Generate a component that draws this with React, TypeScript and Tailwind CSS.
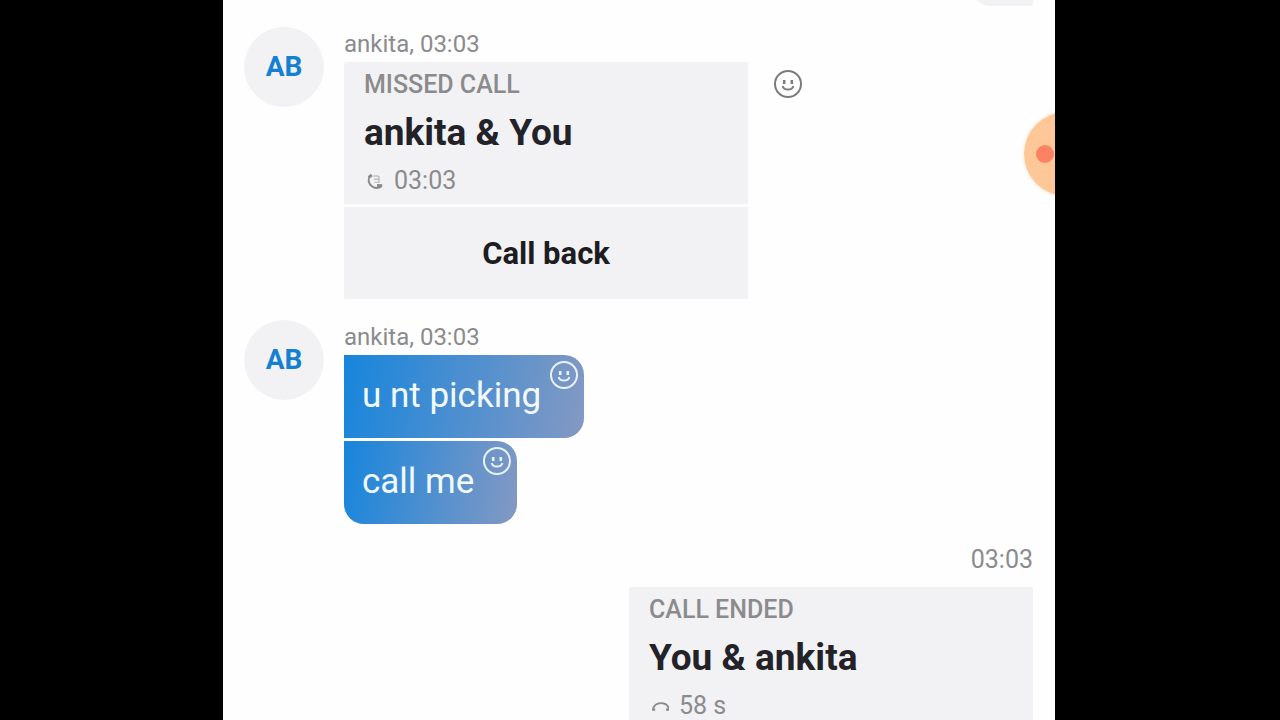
import type { ReactNode } from 'react';
import clsx from 'clsx';

function SmileIcon() {
  return (
    <svg viewBox="0 0 28 28" className="block size-7" fill="none" stroke="currentColor" aria-hidden="true">
      <circle cx="14" cy="14" r="13" strokeWidth="2" />
      <path d="M10.200 10v4M17.800 10v4" strokeWidth="2.600" />
      <path d="M8.600 16c.8 2.600 2.800 3.600 5.400 3.600s4.600-1 5.400-3.600" strokeWidth="2" />
    </svg>
  );
}

function MissedIcon() {
  return (
    <svg viewBox="0 0 20 20" className="size-5" fill="none" stroke="currentColor" aria-hidden="true">
      <path d="M6 5C3.600 8 4.200 13 8.400 15.600c3 1.800 6.600 1.600 9-.4" strokeWidth="2" />
      <path d="M4.800 6.400 7.800 4M13 14.400l5.200.4" strokeWidth="3" />
      <path d="M9.400 5h5M9.800 8.200h5M10.400 11.400h5M15 5v7" strokeWidth="1.400" opacity="0.500" />
    </svg>
  );
}

function EndedIcon() {
  return (
    <svg viewBox="0 0 20 20" className="size-5" fill="none" stroke="currentColor" aria-hidden="true">
      <path d="M4 14C4.600 9 7.600 7.200 12 7.200s7.400 1.800 8 6.800" strokeWidth="1.800" />
      <path d="M3.200 13.600h3M17 13.600h3" strokeWidth="2.400" />
    </svg>
  );
}

function ReactButton({ className }: { className?: string }) {
  return (
    <button type="button" aria-label="React" className={clsx('size-7 shrink-0 rounded-full', className)}>
      <SmileIcon />
    </button>
  );
}

function Message({ time, children }: { time: string; children: ReactNode }) {
  return (
    <article className="flex items-start gap-5">
      <div className="flex size-20 shrink-0 items-center justify-center rounded-full bg-[#f2f2f4] text-[28px] font-bold text-[#1580d2]">
        AB
      </div>
      <div className="min-w-0 flex-1">
        <p className="text-2xl leading-[35px] text-[#8b8b8d]">ankita, {time}</p>
        {children}
      </div>
    </article>
  );
}

type CallCardProps = {
  status: string;
  title: string;
  detail: string;
  icon: ReactNode;
  action?: string;
};

function CallCard({ status, title, detail, icon, action }: CallCardProps) {
  return (
    <div className="w-[404px] max-w-full">
      <div className="rounded-t-xs bg-[#f2f2f4] px-5 py-2">
        <p className="text-[25px] leading-[30px] font-medium text-[#8b8b8d]">{status}</p>
        <h2 className="my-[13px] text-[37px] leading-10 font-bold text-[#222228]">{title}</h2>
        <p className="flex items-center gap-2.5 text-[25px] leading-[30px] text-[#8b8b8d]">
          {icon}
          {detail}
        </p>
      </div>
      {action && (
        <button
          type="button"
          className="mt-[3px] h-[92px] w-full rounded-b-xs bg-[#f2f2f4] pt-0.5 text-[31px] font-bold text-[#1c1c22]"
        >
          {action}
        </button>
      )}
    </div>
  );
}

function Bubble({ text, className }: { text: string; className: string }) {
  return (
    <div
      className={clsx(
        'relative h-[83px] bg-linear-100/srgb from-[#1785dc] to-[#8499c3] pr-[43px] pl-[18px] text-[35px] leading-[82px] text-[#f2faff]',
        className,
      )}
    >
      {text}
      <ReactButton className="absolute top-[6px] right-[6px] text-[#e9f3fc]" />
    </div>
  );
}

export default function App() {
  return (
    <div className="h-screen overflow-hidden bg-black pr-0.5 font-['Roboto',sans-serif]">
      <main className="relative mx-auto h-full w-full max-w-[832px] overflow-hidden bg-[#fefefe] pr-[22px] pl-[21px]">
        {/* tail of the previous outgoing bubble, scrolled off the top */}
        <div className="-mt-[77px] ml-auto h-[83px] w-[62px] rounded-bl-[20px] rounded-br-xs bg-[#f2f2f4]" />

        <div className="flex flex-col gap-[21px] pt-[21px]">
          <Message time="03:03">
            <div className="flex items-start gap-[26px]">
              <CallCard
                status="MISSED CALL"
                title="ankita & You"
                detail="03:03"
                icon={<MissedIcon />}
                action="Call back"
              />
              <ReactButton className="mt-2 text-[#7c7c7e]" />
            </div>
          </Message>

          <Message time="03:03">
            <div className="flex flex-col items-start gap-[3px]">
              <Bubble text="u nt picking" className="rounded-r-[20px]" />
              <Bubble text="call me" className="rounded-r-[20px] rounded-bl-[20px]" />
            </div>
          </Message>
        </div>

        <article className="flex flex-col items-end pt-[18px]">
          <p className="mb-2.5 text-[25px] leading-[35px] text-[#8b8b8d]">03:03</p>
          <CallCard status="CALL ENDED" title="You & ankita" detail="58 s" icon={<EndedIcon />} />
        </article>

        <button
          type="button"
          aria-label="Record"
          className="absolute top-28 -right-[53px] size-[84px] rounded-full bg-[#fec797] shadow-[0_0_4px_#fee3cc]"
        >
          <span className="absolute top-[33px] left-3 size-[18px] rounded-full bg-[#fc8263]" />
        </button>
      </main>
    </div>
  );
}
